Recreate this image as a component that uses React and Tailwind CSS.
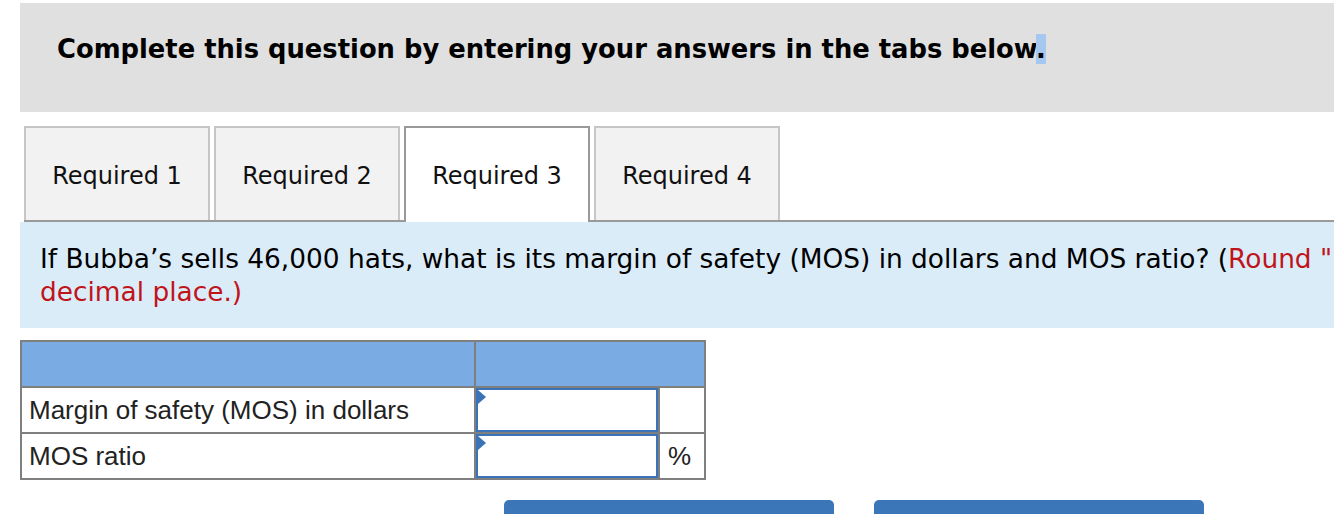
import React from 'react';

const tabs = ['Required 1', 'Required 2', 'Required 3', 'Required 4'];

const InputCell = () => (
    <div className="relative w-[182px] h-full border-2 border-[#3b73b9] bg-white">
        {/* little answer marker */}
        <div className="absolute left-0 top-0 w-0 h-0 border-y-[7px] border-y-transparent border-l-[8px] border-l-[#3b73b9]" />
    </div>
);

export default function App() {
    return (
        <div className="relative w-[1334px] h-[514px] overflow-hidden bg-white">
            {/* Instruction band */}
            <div className="mt-[3px] ml-[20px] h-[109px] bg-[#e0e0e0] pl-[37px] pt-[30px]">
                <h1 className="text-[25.8px] leading-[32px] font-bold text-black [font-family:'DejaVu_Sans',Verdana,sans-serif] whitespace-nowrap">
                    Complete this question by entering your answers in the tabs below<span className="bg-[#a6c8f0]">.</span>
                </h1>
            </div>

            {/* Tabs */}
            <div className="mt-[14px] ml-[24px] flex items-end gap-[4px] border-b-2 border-[#9a9a9a] h-[96px]">
                {tabs.map((t, i) =>
                    i === 2 ? (
                        <div
                            key={t}
                            className="w-[186px] h-[96px] -mb-[2px] border-2 border-b-0 border-[#999] bg-white flex items-center justify-center pt-[1px] text-[24px] text-[#111] [font-family:'DejaVu_Sans',Verdana,sans-serif]"
                        >
                            {t}
                        </div>
                    ) : (
                        <div
                            key={t}
                            className="w-[186px] h-[94px] border-2 border-b-0 border-[#c6c6c6] bg-[#f2f2f2] flex items-center justify-center pt-[3px] text-[24px] text-[#111] [font-family:'DejaVu_Sans',Verdana,sans-serif]"
                        >
                            {t}
                        </div>
                    )
                )}
            </div>

            {/* Question text */}
            <div className="ml-[20px] h-[106px] bg-[#dbecf9] pl-[20px] pt-[20px] overflow-hidden">
                <p className="text-[26.4px] leading-[33px] text-black whitespace-nowrap [font-family:'DejaVu_Sans',Verdana,sans-serif]">
                    If Bubba’s sells 46,000 hats, what is its margin of safety (MOS) in dollars and MOS ratio? (
                    <span className="text-[#c0141b]">Round "MOS ratio" answer to 1</span>
                    <br />
                    <span className="text-[#c0141b]">decimal place.)</span>
                </p>
            </div>

            {/* Answer table */}
            <div className="mt-[12px] ml-[20px] w-[686px] border-2 border-[#7f7f7f] [font-family:'Liberation_Sans',Arial,sans-serif] text-[26px] text-[#222]">
                <div className="flex h-[44px] bg-[#7aabe3]">
                    <div className="w-[454px] border-r-2 border-[#7f7f7f]" />
                    <div className="flex-1" />
                </div>
                <div className="flex h-[46px] border-t-2 border-[#7f7f7f]">
                    <div className="w-[454px] border-r-2 border-[#7f7f7f] flex items-center pl-[7px]">
                        Margin of safety (MOS) in dollars
                    </div>
                    <InputCell />
                    <div className="flex-1 border-l-2 border-[#7f7f7f]" />
                </div>
                <div className="flex h-[46px] border-t-2 border-[#7f7f7f]">
                    <div className="w-[454px] border-r-2 border-[#7f7f7f] flex items-center pl-[7px]">
                        MOS ratio
                    </div>
                    <InputCell />
                    <div className="flex-1 border-l-2 border-[#7f7f7f] flex items-center pl-[8px]">%</div>
                </div>
            </div>

            {/* Nav buttons (cut off at bottom) */}
            <div className="mt-[20px] ml-[504px] flex gap-[40px]">
                <button className="w-[330px] h-[30px] rounded-t-[5px] bg-[#3a76b8]" />
                <button className="w-[330px] h-[30px] rounded-t-[5px] bg-[#3a76b8]" />
            </div>
        </div>
    );
}
